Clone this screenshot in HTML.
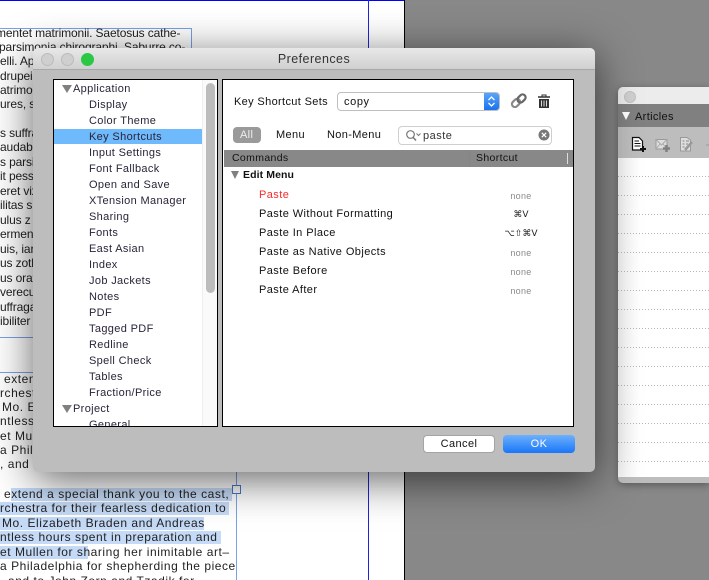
<!DOCTYPE html>
<html><head><meta charset="utf-8">
<style>
html,body{margin:0;padding:0}
body{width:709px;height:580px;position:relative;overflow:hidden;background:#888;font-family:"Liberation Sans",sans-serif;color:#111}
.a{position:absolute}
.t{position:absolute;white-space:nowrap;font-size:11px;line-height:14px;letter-spacing:.35px}
#page{left:0;top:0;width:404px;height:580px;background:#fff;border-right:1px solid #000;overflow:hidden}
.b{position:absolute;white-space:nowrap;font-size:12px;line-height:14px;letter-spacing:-.13px;color:#222}
.l{position:absolute;white-space:nowrap;font-size:12px;line-height:14px;letter-spacing:.54px;color:#222}
.sel{position:absolute;background:#c5daf6}
#dlg{left:33px;top:48px;width:562px;height:424px;background:#bdbdbd;border-radius:5px;box-shadow:0 8px 42px rgba(0,0,0,.62);overflow:hidden}
#bar{left:0;top:0;width:562px;height:21px;background:linear-gradient(#e8e8e8,#d0d0d0);border-bottom:1px solid #a8a8a8}
.dot{position:absolute;width:11px;height:11px;border-radius:50%;background:#cfcfcf;border:1px solid #bbb;top:5px}
#left{left:53px;top:79px;width:163px;height:346px;background:#fff;border:1.5px solid #000;overflow:hidden}
#right{left:222px;top:79px;width:350px;height:346px;background:#fff;border:1.5px solid #000;overflow:hidden}
.i{position:absolute;left:35px;color:#2a2438}
.h{position:absolute;left:19px;color:#2a2438}
.tri{position:absolute;width:0;height:0;border-left:5px solid transparent;border-right:5px solid transparent;border-top:8px solid #808080}
.c{position:absolute;left:36px;color:#111;font-size:11px;letter-spacing:.42px;white-space:nowrap;line-height:14px}
.n{position:absolute;width:60px;left:268px;text-align:center;color:#8a8a8a;font-size:9px;line-height:12px;letter-spacing:.3px}
.k{position:absolute;width:60px;left:268px;text-align:center;color:#222;font-size:9px;line-height:12px;font-family:"DejaVu Sans",sans-serif}
</style></head><body>

<div class="a" id="page">
  <div class="a" style="left:0;top:0;width:404px;height:1px;background:#00f"></div>
  <div class="a" style="left:368px;top:0;width:1px;height:580px;background:#22d"></div>
  <div class="a" style="left:0;top:28px;width:192px;height:310px;border:1px solid #7aa0e8;border-left:0;box-sizing:border-box"></div>
  <div class="a" style="left:0;top:372px;width:237px;height:220px;border:1px solid #7aa0e8;border-left:0;box-sizing:border-box"></div>
  <div class="a" style="left:232px;top:485px;width:9px;height:9px;background:#fff;border:1px solid #4a78c8;box-sizing:border-box"></div>

  <div class="b" style="left:-4px;top:26px">mentet matrimonii. Saetosus cathe-</div>
  <div class="b" style="left:-1px;top:40px">parsimonia chirographi. Saburre co-</div>
  <div class="b" style="left:0;top:54px">elli. Ap</div>
  <div class="b" style="left:0;top:69px">drupei</div>
  <div class="b" style="left:0;top:83px">atrimon</div>
  <div class="b" style="left:0;top:97px">ures, s</div>
  <div class="b" style="left:0;top:126px">s suffra</div>
  <div class="b" style="left:0;top:140px">audabil</div>
  <div class="b" style="left:0;top:155px">s parsi</div>
  <div class="b" style="left:0;top:169px">it pess</div>
  <div class="b" style="left:0;top:184px">eret vix</div>
  <div class="b" style="left:0;top:198px">ilitas s</div>
  <div class="b" style="left:0;top:213px">ulus z</div>
  <div class="b" style="left:0;top:227px">erment</div>
  <div class="b" style="left:0;top:242px">uis, iar</div>
  <div class="b" style="left:0;top:256px">us zoth</div>
  <div class="b" style="left:0;top:271px">us orat</div>
  <div class="b" style="left:0;top:285px">verecu</div>
  <div class="b" style="left:0;top:300px">uffraga</div>
  <div class="b" style="left:0;top:314px">ibiliter</div>

  <div class="l" style="left:4px;top:372px">exten</div>
  <div class="l" style="left:0;top:386px">rchest</div>
  <div class="l" style="left:2px;top:400px">Mo. E</div>
  <div class="l" style="left:0;top:414px">ntless</div>
  <div class="l" style="left:0;top:429px">et Mul</div>
  <div class="l" style="left:0;top:443px">a Phila</div>
  <div class="l" style="left:0;top:457px">, and</div>

  <div class="sel" style="left:11px;top:488px;width:221px;height:13px"></div>
  <div class="sel" style="left:0;top:502px;width:229px;height:13px"></div>
  <div class="sel" style="left:0;top:517px;width:204px;height:13px"></div>
  <div class="sel" style="left:0;top:531px;width:221px;height:13px"></div>
  <div class="sel" style="left:0;top:546px;width:88px;height:13px"></div>

  <div class="l" style="left:4px;top:487px">extend a special thank you to the cast,</div>
  <div class="l" style="left:0;top:501px">rchestra for their fearless dedication to</div>
  <div class="l" style="left:2px;top:516px">Mo. Elizabeth Braden and Andreas</div>
  <div class="l" style="left:0;top:530px">ntless hours spent in preparation and</div>
  <div class="l" style="left:0;top:545px">et Mullen for sharing her inimitable art–</div>
  <div class="l" style="left:0;top:559px">a Philadelphia for shepherding the piece</div>
  <div class="l" style="left:8px;top:574px">and to John Zorn and Tzadik for</div>
</div>

<!-- Articles palette -->
<div class="a" style="left:618px;top:87px;width:91px;height:396px;background:#bdbdbd;border-radius:5px 0 0 5px;box-shadow:0 2px 8px rgba(0,0,0,.35);overflow:hidden">
  <div class="a" style="left:0;top:0;width:91px;height:17px;background:#ececec"></div>
  <div class="a" style="left:6px;top:4px;width:10px;height:10px;border-radius:50%;background:#d0d0d0;border:1px solid #c2c2c2"></div>
  <div class="a" style="left:0;top:17px;width:91px;height:23px;background:#808080"></div>
  <div class="a" style="left:4px;top:25px;width:0;height:0;border-left:4.500px solid transparent;border-right:4.500px solid transparent;border-top:8px solid #fff"></div>
  <div class="t" style="left:17px;top:23px;font-size:11px;color:#111">Articles</div>
  <div class="a" style="left:0;top:71px;width:91px;height:319px;background:linear-gradient(90deg,#f3f3f3,#fff 22px);background-color:#fff"></div>
  <svg class="a" style="left:0;top:71px" width="91" height="319">
    <g stroke="#b5b5b5" stroke-dasharray="1 2" stroke-width="1">
      <path d="M0 18.500H91M0 37.500H91M0 56.500H91M0 75.500H91M0 94.500H91M0 113.500H91M0 132.500H91M0 151.500H91M0 170.500H91M0 189.500H91M0 208.500H91M0 227.500H91M0 246.500H91M0 265.500H91M0 284.500H91M0 303.500H91"/>
    </g>
  </svg>
  <svg class="a" style="left:12px;top:49px" width="79" height="18">
    <path d="M2.500 1.500H9L12.500 5V14H2.500Z" fill="#fff" stroke="#111" stroke-width="1.200"/>
    <path d="M4.500 5H9M4.500 7.500H10.500M4.500 10H10.500" stroke="#111"/>
    <path d="M13 10V16M10 13H16" stroke="#111" stroke-width="2"/>
    <path d="M26 3.500H37V13H26Z" fill="#ddd" stroke="#999"/>
    <path d="M26 3.500L31.500 9L37 3.500M26 13L30 8M37 13L33 8" fill="none" stroke="#aaa"/>
    <path d="M36.500 9V16M33 12.500H40" stroke="#808080" stroke-width="2.500"/>
    <path d="M50.500 1.500H57L60.500 4V15H50.500Z" fill="#ddd" stroke="#999"/>
    <path d="M52.500 5H54.500M52.500 8H54.500M52.500 11H54.500M56 5H59M56 8H58" stroke="#888"/>
    <path d="M55 14L62 6" stroke="#999" stroke-width="2.500"/>
    <path d="M76 9H79" stroke="#999"/>
  </svg>
</div>

<!-- Dialog -->
<div class="a" id="dlg">
  <div class="a" id="bar"></div>
  <div class="dot" style="left:8px"></div>
  <div class="dot" style="left:28px"></div>
  <div class="dot" style="left:48px;background:#2ac845;border-color:#2ac845"></div>
  <div class="t" style="left:0;width:562px;text-align:center;top:4px;font-size:12.500px;color:#333;letter-spacing:.45px">Preferences</div>
</div>

<div class="a" id="left">
  <div class="a" style="left:148px;top:0;width:15px;height:348px;background:#fafafa;border-left:1px solid #efefef;box-sizing:border-box"></div>
  <div class="a" style="left:152px;top:3px;width:9px;height:210px;background:#bcbcbc;border-radius:5px"></div>
  <div class="a" style="left:0;top:49px;width:148px;height:15px;background:#6fb9fd"></div>
  <div class="tri" style="left:8px;top:5px"></div>
  <div class="tri" style="left:8px;top:325px"></div>
  <div class="t h" style="top:2px">Application</div>
  <div class="t i" style="top:18px">Display</div>
  <div class="t i" style="top:34px">Color Theme</div>
  <div class="t i" style="top:50px">Key Shortcuts</div>
  <div class="t i" style="top:66px">Input Settings</div>
  <div class="t i" style="top:82px">Font Fallback</div>
  <div class="t i" style="top:98px">Open and Save</div>
  <div class="t i" style="top:114px">XTension Manager</div>
  <div class="t i" style="top:130px">Sharing</div>
  <div class="t i" style="top:146px">Fonts</div>
  <div class="t i" style="top:162px">East Asian</div>
  <div class="t i" style="top:178px">Index</div>
  <div class="t i" style="top:194px">Job Jackets</div>
  <div class="t i" style="top:210px">Notes</div>
  <div class="t i" style="top:226px">PDF</div>
  <div class="t i" style="top:242px">Tagged PDF</div>
  <div class="t i" style="top:258px">Redline</div>
  <div class="t i" style="top:274px">Spell Check</div>
  <div class="t i" style="top:290px">Tables</div>
  <div class="t i" style="top:306px">Fraction/Price</div>
  <div class="t h" style="top:322px">Project</div>
  <div class="t i" style="top:338px">General</div>
</div>

<div class="a" id="right">
  <div class="t" style="left:11px;top:15px;color:#111">Key Shortcut Sets</div>
  <div class="a" style="left:114px;top:12px;width:163px;height:19px;background:#fff;border:1px solid #bfbfbf;border-radius:4px;box-sizing:border-box;overflow:hidden">
    <div class="a" style="right:0;top:0;width:15px;height:17px;background:linear-gradient(#5aa4fb,#1a72ee)"></div>
    <svg class="a" style="right:0;top:0" width="15" height="17"><path d="M4.500 7L7.500 4L10.500 7M4.500 10L7.500 13L10.500 10" fill="none" stroke="#fff" stroke-width="1.300"/></svg>
  </div>
  <div class="t" style="left:121px;top:15px;color:#111;letter-spacing:.6px">copy</div>
  <svg class="a" style="left:287px;top:12px" width="18" height="18">
    <rect x="1.500" y="8" width="9" height="6" rx="3" transform="rotate(-45 6 11)" fill="none" stroke="#8a8a8a" stroke-width="2.200"/>
    <rect x="7" y="3.500" width="9" height="6" rx="3" transform="rotate(-45 11.500 6.500)" fill="none" stroke="#666" stroke-width="2.200"/>
  </svg>
  <svg class="a" style="left:314px;top:14px" width="14" height="15"><path d="M1 3H13" stroke="#333" stroke-width="1.500"/><path d="M5 2.500V1H9V2.500" fill="none" stroke="#333"/><path d="M2 5H12V14H2Z" fill="#333"/><path d="M4.500 6.500V12.500M7 6.500V12.500M9.500 6.500V12.500" stroke="#ddd"/></svg>

  <div class="a" style="left:10px;top:47px;width:28px;height:16px;background:#9a9a9a;border-radius:4px"></div>
  <div class="t" style="left:17px;top:48px;color:#eee">All</div>
  <div class="t" style="left:53px;top:48px;color:#111">Menu</div>
  <div class="t" style="left:104px;top:48px;color:#111">Non-Menu</div>
  <div class="a" style="left:175px;top:46px;width:154px;height:19px;background:#fff;border:1px solid #cfcfcf;border-radius:4px;box-sizing:border-box"></div>
  <svg class="a" style="left:182px;top:49px" width="18" height="13"><circle cx="5.500" cy="5.500" r="3.800" fill="none" stroke="#777" stroke-width="1.200"/><path d="M8.200 8.500L11 11.500" stroke="#777" stroke-width="1.500"/><path d="M11.500 4.500L13.500 6.500L15.500 4.500" fill="none" stroke="#777"/></svg>
  <div class="t" style="left:200px;top:49px;color:#333;letter-spacing:.5px">paste</div>
  <svg class="a" style="left:315px;top:49px" width="12" height="12"><circle cx="6" cy="6" r="5.500" fill="#777"/><path d="M3.800 3.800L8.200 8.200M8.200 3.800L3.800 8.200" stroke="#fff" stroke-width="1.200"/></svg>

  <div class="a" style="left:1px;top:70px;width:349px;height:17px;background:#888"></div>
  <div class="t" style="left:9px;top:71px;font-size:10.500px;color:#111">Commands</div>
  <div class="t" style="left:253px;top:71px;font-size:10.500px;color:#111">Shortcut</div>
  <div class="a" style="left:344px;top:73px;width:1px;height:11px;background:#ddd"></div>
  <div class="a" style="left:246px;top:71px;width:1px;height:15px;background:#848484"></div>

  <div class="tri" style="left:8px;top:91px;border-left-width:4.500px;border-right-width:4.500px"></div>
  <div class="t" style="left:20px;top:88px;font-weight:bold;font-size:10.500px;color:#111;letter-spacing:.1px">Edit Menu</div>

  <div class="c" style="top:108px;color:#f52c2c">Paste</div><div class="n" style="top:110px">none</div>
  <div class="c" style="top:127px">Paste Without Formatting</div><div class="k" style="top:129px">⌘V</div>
  <div class="c" style="top:146px">Paste In Place</div><div class="k" style="top:148px">⌥⇧⌘V</div>
  <div class="c" style="top:165px">Paste as Native Objects</div><div class="n" style="top:167px">none</div>
  <div class="c" style="top:184px">Paste Before</div><div class="n" style="top:186px">none</div>
  <div class="c" style="top:203px">Paste After</div><div class="n" style="top:205px">none</div>
</div>

<div class="a" style="left:423px;top:435px;width:72px;height:18px;background:#fff;border:1px solid #a4a4a4;border-radius:4px;box-sizing:border-box;text-align:center;font-size:11px;line-height:16px;letter-spacing:.4px;color:#111">Cancel</div>
<div class="a" style="left:503px;top:435px;width:72px;height:18px;background:linear-gradient(#6db0fd,#1a76f8);border-radius:4px;text-align:center;font-size:11px;line-height:18px;letter-spacing:.4px;color:#fff">OK</div>

</body></html>
